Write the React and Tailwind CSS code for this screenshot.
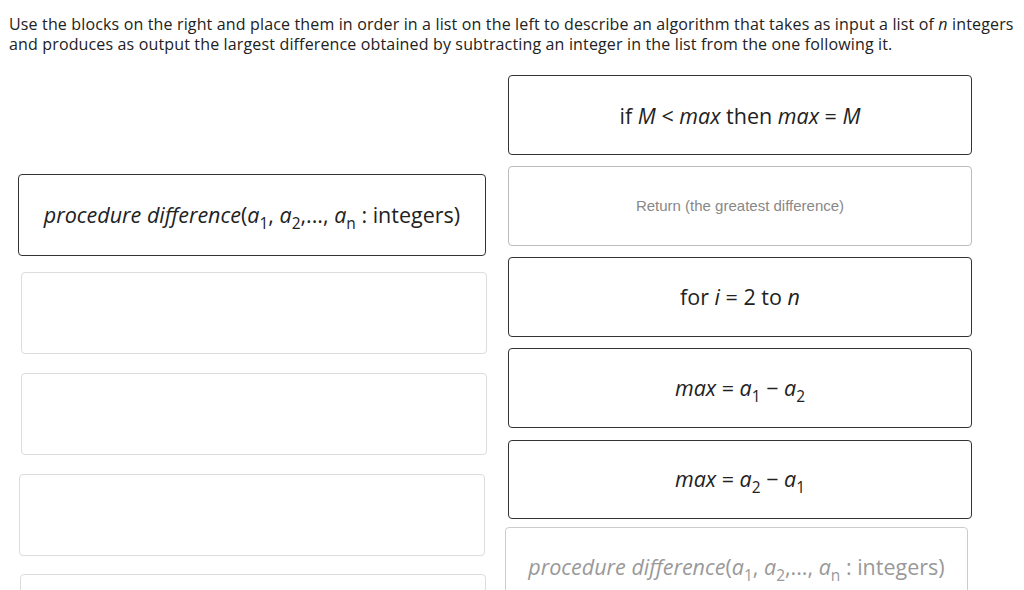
import React from "react";

const calibri = { fontFamily: '"Open Sans", "Noto Sans", sans-serif' };

function Sub({ children }) {
  return <sub className="text-[0.72em] align-[-0.12em]">{children}</sub>;
}

function ProcText() {
  return (
    <span>
      <i>procedure difference</i>(<i>a</i><Sub>1</Sub>, <i>a</i><Sub>2</Sub>,..., <i>a</i><Sub>n</Sub> : integers)
    </span>
  );
}

export default function App() {
  return (
    <div className="w-[1024px] h-[590px] overflow-hidden bg-white relative">
      <div
        className="pl-[9px] pt-[14px] text-[16px] leading-[20px] tracking-[0.15px] text-[#222] whitespace-nowrap"
        style={{ fontFamily: '"Open Sans", "Noto Sans", sans-serif' }}
      >
        <div>Use the blocks on the right and place them in order in a list on the left to describe an algorithm that takes as input a list of <i>n</i> integers</div>
        <div>and produces as output the largest difference obtained by subtracting an integer in the list from the one following it.</div>
      </div>
      <div className="flex mt-[21px]">
        <div className="ml-[18px] w-[469px] pt-[99px] flex flex-col" style={calibri}>
          <div className="h-[82px] w-[468px] border border-[#333] rounded-[4px] flex items-center justify-center text-[21.5px] text-[#222]">
            <ProcText />
          </div>
          <div className="mt-[16px] ml-[3px] h-[82px] w-[466px] border border-[#ddd] rounded-[4px]" />
          <div className="mt-[19px] ml-[3px] h-[82px] w-[466px] border border-[#ddd] rounded-[4px]" />
          <div className="mt-[19px] ml-[1px] h-[82px] w-[466px] border border-[#ddd] rounded-[4px]" />
          <div className="mt-[18px] ml-[2px] h-[82px] w-[466px] border border-[#ddd] rounded-[4px]" />
        </div>
        <div className="ml-[21px] w-[464px] flex flex-col" style={calibri}>
          <div className="h-[80px] w-[464px] pt-[2px] border border-[#333] rounded-[4px] flex items-center justify-center text-[21.5px] text-[#222]">
            <span>if <i>M</i> &lt; <i>max</i> then <i>max</i> = <i>M</i></span>
          </div>
          <div
            className="mt-[11px] h-[80px] w-[464px] border border-[#bbb] rounded-[4px] flex items-center justify-center text-[15px] text-[#888]"
            style={{ fontFamily: '"Liberation Sans", Arial, sans-serif' }}
          >
            Return (the greatest difference)
          </div>
          <div className="mt-[11px] h-[80px] w-[464px] border border-[#333] rounded-[4px] flex items-center justify-center text-[21.5px] text-[#222]">
            <span>for <i>i</i> = 2 to <i>n</i></span>
          </div>
          <div className="mt-[11px] h-[80px] w-[464px] border border-[#333] rounded-[4px] flex items-center justify-center text-[21.5px] text-[#222]">
            <span><i>max</i> = <i>a</i><Sub>1</Sub> − <i>a</i><Sub>2</Sub></span>
          </div>
          <div className="mt-[12px] h-[79px] w-[464px] border border-[#333] rounded-[4px] flex items-center justify-center text-[21.5px] text-[#222]">
            <span><i>max</i> = <i>a</i><Sub>2</Sub> − <i>a</i><Sub>1</Sub></span>
          </div>
          <div className="mt-[8px] -ml-[3px] h-[80px] w-[463px] border border-[#ccc] rounded-[4px] flex items-center justify-center text-[21.5px] text-[#999]">
            <ProcText />
          </div>
        </div>
      </div>
    </div>
  );
}
